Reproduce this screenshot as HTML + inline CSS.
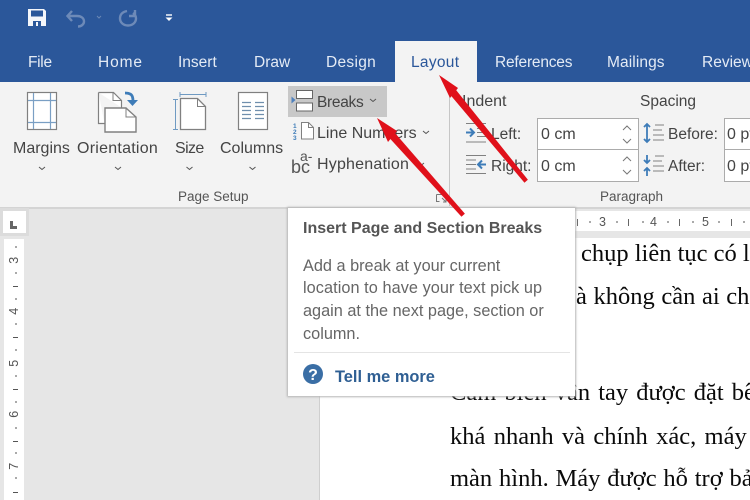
<!DOCTYPE html>
<html><head><meta charset="utf-8">
<style>
html,body{margin:0;padding:0}
body{width:750px;height:500px;overflow:hidden;position:relative;background:#e6e6e6;font-family:"Liberation Sans",sans-serif}
.t{position:absolute;white-space:nowrap;line-height:1}
.tab{color:#e4ebf5;font-size:15.5px;top:55px}
.rb{color:#444;font-size:15.5px}
.gl{color:#555;font-size:13.5px}
.dc{font-family:"Liberation Serif",serif;font-size:24.5px;color:#0a0a0a;position:absolute;white-space:nowrap;line-height:1}
.box{position:absolute;background:#fff;border:1px solid #ababab;box-sizing:border-box}
svg{position:absolute;overflow:visible}
.tip{color:#666;font-size:16.3px}
.r{font-size:12.5px;color:#555}
</style></head><body>
<div style="position:absolute;left:0;top:0;width:750px;height:82px;background:#2b579a"></div>
<div style="position:absolute;left:0;top:82px;width:750px;height:125px;background:#f3f3f3"></div>
<div style="position:absolute;left:0;top:207px;width:750px;height:1.5px;background:#d4d4d4"></div>
<div style="position:absolute;left:395px;top:41px;width:82px;height:42px;background:#f3f3f3"></div>

<svg style="left:0;top:0" width="200" height="36" viewBox="0 0 200 36">
<path d="M28 9h16l2 2v15H28z" fill="#f4f6fa"/><path d="M31 10.500h12v6H31z" fill="#2b579a"/><path d="M33 21h8v5h-8z" fill="#2b579a"/><path d="M36 22h2v4h-2z" fill="#f4f6fa"/>
<path d="M72 11l-4.500 5 4.500 5M68 16h9c4 0 7 2 7 5.500 0 3-3 5-6 5" fill="none" stroke="#6d8ab8" stroke-width="2.400"/>
<path d="M97 16l2 2 2-2" fill="none" stroke="#6a88b5" stroke-width="1"/>
<path d="M127 11c-5 1-7 4-7 7.500 0 4 3.500 7 8 7s8-3 8-7c0-2-1-4-3-5.500M135 10v6h-6" fill="none" stroke="#6d8ab8" stroke-width="2.400"/>
<path d="M166 15h6" stroke="#fff" stroke-width="1.400"/><path d="M165.500 17.500h7l-3.500 3.500z" fill="#fff"/>
</svg>

<div class="t tab" style="left:28px;letter-spacing:-.3px">File</div>
<div class="t tab" style="left:98px;letter-spacing:.9px">Home</div>
<div class="t tab" style="left:178px">Insert</div>
<div class="t tab" style="left:254px">Draw</div>
<div class="t tab" style="left:326px;letter-spacing:.3px">Design</div>
<div class="t tab" style="left:411px;color:#2b579a;letter-spacing:.3px">Layout</div>
<div class="t tab" style="left:495px;letter-spacing:-.2px">References</div>
<div class="t tab" style="left:607px;letter-spacing:.1px">Mailings</div>
<div class="t tab" style="left:702px">Review</div>

<svg style="left:0;top:82px" width="290" height="60" viewBox="0 82 290 60">
<rect x="27.500" y="92.500" width="29" height="37" fill="#fff" stroke="#808080" stroke-width="1.200"/>
<path d="M33.500 93v36M50.500 93v36M28 100.500h28M28 122.500h28" stroke="#7a9fc4" stroke-width="1.200" fill="none"/>
<path d="M98.500 92.500h15l8 8v7M98.500 92.500v31h6" fill="#fff" stroke="#808080" stroke-width="1.200"/>
<path d="M105 108h21l10 9v15h-31z" fill="#fff" stroke="#808080" stroke-width="1.400"/>
<path d="M113 92.500v8h8M126 108v9h10" fill="none" stroke="#808080"/>
<path d="M125 93c6 0 8 2 8 8" fill="none" stroke="#3e7cb8" stroke-width="2.800"/><path d="M127 100h11l-5.500 6z" fill="#3e7cb8"/>
<path d="M180.500 98.500h17l8 8v23h-25z" fill="#fff" stroke="#808080" stroke-width="1.300"/>
<path d="M197.500 98.500v8h8" fill="none" stroke="#808080"/>
<path d="M180 94.500h26M180 92v5M206 92v5M175.500 99v31M173 99.500h5M173 129.500h5" stroke="#6f9ac2" fill="none"/>
<rect x="238.500" y="92.500" width="29" height="37" fill="#fff" stroke="#808080" stroke-width="1.200"/>
<path d="M242 102.500h9M242 106.500h9M242 110.500h9M242 114.500h9M242 118.500h9M255 102.500h9M255 106.500h9M255 110.500h9M255 114.500h9M255 118.500h9" stroke="#6f8fad" stroke-width="1.200" fill="none"/>
</svg>
<div class="t rb" style="left:13px;top:141px;font-size:16px">Margins</div>
<div class="t rb" style="left:77px;top:141px;font-size:16px;letter-spacing:.25px">Orientation</div>
<div class="t rb" style="left:175px;top:141px;font-size:16px;letter-spacing:-.6px">Size</div>
<div class="t rb" style="left:220px;top:141px;font-size:16px">Columns</div>
<svg style="left:0;top:160px" width="270" height="12" viewBox="0 160 270 12">
<path d="M39 167l3 2.500 3-2.500M115 167l3 2.500 3-2.500M186.500 167l3 2.500 3-2.500M249.500 167l3 2.500 3-2.500" fill="none" stroke="#555"/>
</svg>
<div class="t gl" style="left:178px;top:190px">Page Setup</div>

<div style="position:absolute;left:288px;top:86px;width:99px;height:31px;background:#c8c8c8"></div>
<svg style="left:285px;top:85px" width="170" height="125" viewBox="285 85 170 125">
<path d="M291.500 96.500v7l4-3.500z" fill="#4f81bd"/>
<rect x="296.500" y="90.500" width="16" height="8" fill="#fff" stroke="#666"/><rect x="296.500" y="103" width="16" height="8" fill="#fff" stroke="#666"/>
<path d="M370 99l3 2.500 3-2.500M423 131l3 2.500 3-2.500M418 163l3 2.500 3-2.500" fill="none" stroke="#555"/>
<path d="M301.500 122.500h7l5 5v11.500h-12z" fill="#fff" stroke="#808080"/><path d="M308.500 122.500v5h5" fill="none" stroke="#808080"/>
<text x="293" y="128" font-family="Liberation Sans" font-size="6.500" font-weight="bold" fill="#3e7cb8">1</text>
<text x="293" y="134" font-family="Liberation Sans" font-size="6.500" font-weight="bold" fill="#3e7cb8">2</text>
<text x="293" y="140" font-family="Liberation Sans" font-size="6.500" font-weight="bold" fill="#3e7cb8">3</text>
<path d="M436.500 194.500h6M436.500 194.500v7h3M442 198l4 4M446 199v3h-3" fill="none" stroke="#777"/>
<path d="M449.500 88v118" stroke="#c6c6c6"/>
</svg>
<div class="t" style="left:291px;top:158px;font-size:18px;color:#555">bc</div>
<div class="t" style="left:300px;top:149px;font-size:14px;color:#555">a-</div>
<div class="t rb" style="left:317px;top:95px;letter-spacing:-.3px">Breaks</div>
<div class="t rb" style="left:317px;top:126px;font-size:16px">Line Numbers</div>
<div class="t rb" style="left:317px;top:157px;font-size:16px;letter-spacing:.2px">Hyphenation</div>

<div class="t rb" style="left:462px;top:94px;font-size:16px">Indent</div>
<div class="t rb" style="left:640px;top:94px">Spacing</div>
<div class="t rb" style="left:491px;top:127px">Left:</div>
<div class="t rb" style="left:491px;top:159px">Right:</div>
<div class="t rb" style="left:668px;top:127px">Before:</div>
<div class="t rb" style="left:668px;top:159px">After:</div>
<svg style="left:460px;top:118px" width="220" height="60" viewBox="460 118 220 60">
<path d="M466 123.500h20M477 128.500h9M477 132.500h9M477 136.500h9M466 142h20M466 155.500h20M466 160h10M466 164.500h10M466 169h10M466 173.500h20" stroke="#808080" fill="none"/>
<path d="M466 132.500h7M470 128.500l4 4-4 4M486 164.500h-8M482 160.500l-4 4 4 4" stroke="#3e7cb8" stroke-width="2" fill="none"/>
<path d="M647 124v18M644 127l3-3 3 3M644 139l3 3 3-3M647 155v8M644 160l3 3 3-3M647 176v-8M644 171l3-3 3 3" stroke="#3e7cb8" stroke-width="1.800" fill="none"/>
<path d="M655 125h9M653 130h9M653 135h11M653 140h11M655 156h9M653 161h9M653 166h11M653 171h11" stroke="#808080" fill="none"/>
</svg>
<div class="box" style="left:537px;top:118px;width:102px;height:32px"></div>
<div class="box" style="left:537px;top:149px;width:102px;height:33px"></div>
<div class="box" style="left:724px;top:118px;width:40px;height:32px"></div>
<div class="box" style="left:724px;top:149px;width:40px;height:33px"></div>
<svg style="left:620px;top:118px" width="20" height="64" viewBox="620 118 20 64">
<path d="M623 130l4-4 4 4M623 139l4 4 4-4M623 161l4-4 4 4M623 170l4 4 4-4" fill="none" stroke="#777"/>
</svg>
<div class="t rb" style="left:541px;top:127px;font-size:16px">0 cm</div>
<div class="t rb" style="left:541px;top:159px;font-size:16px">0 cm</div>
<div class="t rb" style="left:727px;top:127px;font-size:16px">0 pt</div>
<div class="t rb" style="left:727px;top:159px;font-size:16px">0 pt</div>
<div class="t gl" style="left:600px;top:190px">Paragraph</div>

<!-- rulers -->
<div style="position:absolute;left:0;top:208px;width:29px;height:28px;background:#dcdcdc"></div>
<div style="position:absolute;left:3px;top:211px;width:23px;height:22px;background:#fff"></div>
<div style="position:absolute;left:10px;top:221px;width:3px;height:8px;background:#666"></div>
<div style="position:absolute;left:10px;top:226px;width:7px;height:3px;background:#666"></div>
<div style="position:absolute;left:4px;top:239px;width:20px;height:261px;background:#fff"></div>
<div class="t r" style="left:11px;top:254px;transform:rotate(-90deg)">3</div>
<div class="t r" style="left:11px;top:305px;transform:rotate(-90deg)">4</div>
<div class="t r" style="left:11px;top:357px;transform:rotate(-90deg)">5</div>
<div class="t r" style="left:11px;top:408px;transform:rotate(-90deg)">6</div>
<div class="t r" style="left:11px;top:460px;transform:rotate(-90deg)">7</div>
<svg style="left:4px;top:239px" width="20" height="261" viewBox="4 239 20 261">
<path d="M16 246v2M16 272v2M16 298v2M16 323v2M16 349v2M16 375v2M16 401v2M16 427v2M16 452v2M16 477v2" stroke="#555"/>
<path d="M13 286.500h5M13 337.500h5M13 389.500h5M13 441.500h5M13 492.500h5" stroke="#555"/>
</svg>
<div style="position:absolute;left:320px;top:238px;width:430px;height:262px;background:#fff;box-shadow:-1px 0 0 #cfcfcf"></div>
<div style="position:absolute;left:320px;top:211px;width:430px;height:20px;background:#fff"></div>
<div class="t r" style="left:599px;top:216px">3</div>
<div class="t r" style="left:650px;top:216px">4</div>
<div class="t r" style="left:702px;top:216px">5</div>
<svg style="left:575px;top:211px" width="175" height="20" viewBox="575 211 175 20">
<path d="M577.500 219v7M628.500 219v7M679.500 219v7M731.500 219v7" stroke="#666"/>
<path d="M589 222h2M616 222h2M642 222h2M667 222h2M692 222h2M718 222h2M743 222h2" stroke="#555"/>
</svg>

<div class="dc" style="left:581px;top:242px">chụp liên tục có l</div>
<div class="dc" style="left:576px;top:285px;word-spacing:.5px">à không cần ai ch</div>
<div class="dc" style="left:450px;top:381px;word-spacing:2px">Cảm biến vân tay được đặt bê</div>
<div class="dc" style="left:450px;top:425px;word-spacing:2.200px">khá nhanh và chính xác, máy</div>
<div class="dc" style="left:450px;top:467px;word-spacing:.7px">màn hình. Máy được hỗ trợ bả</div>

<!-- tooltip -->
<div style="position:absolute;left:288px;top:208px;width:287px;height:188px;background:#fff;box-shadow:0 0 2px 1px #b5b5b5"></div>
<div class="t" style="left:303px;top:221px;font-size:16px;font-weight:bold;color:#555">Insert Page and Section Breaks</div>
<div class="t tip" style="left:303px;top:258px">Add a break at your current</div>
<div class="t tip" style="left:303px;top:280px;letter-spacing:.06px">location to have your text pick up</div>
<div class="t tip" style="left:303px;top:303px">again at the next page, section or</div>
<div class="t tip" style="left:303px;top:326px">column.</div>
<div style="position:absolute;left:294px;top:352px;width:276px;height:1px;background:#e4e4e4"></div>
<svg style="left:303px;top:364px" width="20" height="20" viewBox="0 0 20 20">
<circle cx="10" cy="10" r="10" fill="#3a6ea5"/>
<text x="10" y="16" text-anchor="middle" font-family="Liberation Sans" font-weight="bold" font-size="16" fill="#fff">?</text>
</svg>
<div class="t" style="left:335px;top:369px;font-size:16.400px;font-weight:bold;color:#2f5f93">Tell me more</div>

<!-- arrows -->
<svg style="left:0;top:0" width="750" height="500" viewBox="0 0 750 500">
<path d="M454.700 88.800L527.500 179.700L524.500 182.300L449.300 93.200z" fill="#e0101a" stroke="#e0101a" stroke-width=".6" stroke-linejoin="round"/>
<path d="M439 75l19 13-8 10z" fill="#e0101a"/>
<path d="M392.600 130.700L464.500 213.700L461.500 216.300L387.400 135.300z" fill="#e0101a" stroke="#e0101a" stroke-width=".6" stroke-linejoin="round"/>
<path d="M377 118l20 13-9 11z" fill="#e0101a"/>
</svg>
</body></html>
